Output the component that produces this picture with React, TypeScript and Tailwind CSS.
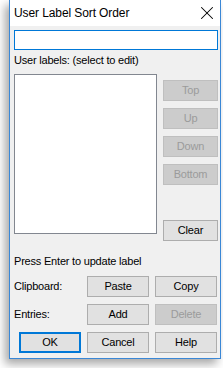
import { X } from 'lucide-react';

const FONT = '"Liberation Sans", Arial, sans-serif';

function Btn({
  label,
  disabled,
  primary,
  className = '',
}: {
  label: string;
  disabled?: boolean;
  primary?: boolean;
  className?: string;
}) {
  const tone = disabled
    ? 'bg-[#cccccc] border border-[#bfbfbf] text-[#9b9b9b]'
    : primary
      ? 'bg-[#e1e1e1] border-2 border-[#0078d7] text-black'
      : 'bg-[#e1e1e1] border border-[#adadad] text-black';
  return (
    <button
      type="button"
      className={`h-[21px] flex items-center justify-center text-[11px] leading-none ${tone} ${className}`}
    >
      {label}
    </button>
  );
}

export default function App() {
  return (
    <div
      className="w-[223px] h-[368px] bg-white overflow-hidden pl-[9px]"
      style={{ fontFamily: FONT }}
    >
      <div className="w-[212px] h-[359px] flex flex-col border-x border-b border-[#3a87d6] shadow-[-4px_5px_9px_rgba(0,0,0,0.35)]">
        {/* title bar */}
        <div className="h-[26px] bg-white flex items-center pl-[4px] pr-[2px] shrink-0">
          <span className="text-[12px] text-black tracking-[-0.1px]">User Label Sort Order</span>
          <X className="ml-auto w-[22px] h-[22px] text-black" strokeWidth={1.1} aria-hidden="true" />
        </div>

        {/* body */}
        <div className="flex-1 bg-[#f0f0f0] flex flex-col pl-[4px] pr-[2px] text-[11px] text-black tracking-[-0.2px]">
          <div className="mt-[4px] h-[20px] bg-white border border-[#0078d7]" />

          <div className="h-[24px] pt-[2px] leading-[16px]">User labels: (select to edit)</div>

          <div className="flex gap-[6px]">
            <div className="w-[143px] h-[160px] bg-white border border-[#828790]" />
            <div className="w-[55px] pt-[6px] flex flex-col gap-[7px]">
              <Btn label="Top" disabled />
              <Btn label="Up" disabled />
              <Btn label="Down" disabled />
              <Btn label="Bottom" disabled />
              <Btn label="Clear" className="mt-[28px]" />
            </div>
          </div>

          <div className="mt-[12px] leading-[16px]">Press Enter to update label</div>

          <div className="mt-[7px] flex items-center gap-[6px]">
            <span className="w-[67px]">Clipboard:</span>
            <Btn label="Paste" className="w-[62px]" />
            <Btn label="Copy" className="w-[62px]" />
          </div>

          <div className="mt-[7px] flex items-center gap-[6px]">
            <span className="w-[67px]">Entries:</span>
            <Btn label="Add" className="w-[62px]" />
            <Btn label="Delete" disabled className="w-[62px]" />
          </div>

          <div className="mt-[7px] flex items-center gap-[6px] pl-[5px]">
            <Btn label="OK" primary className="w-[62px]" />
            <Btn label="Cancel" className="w-[62px]" />
            <Btn label="Help" className="w-[62px]" />
          </div>
        </div>
      </div>
    </div>
  );
}
